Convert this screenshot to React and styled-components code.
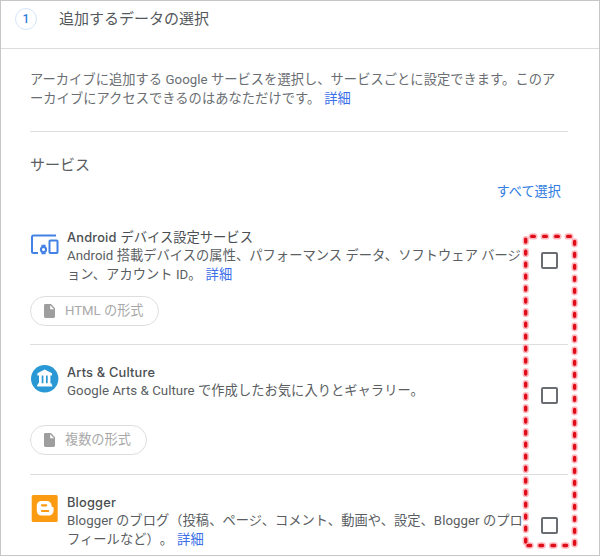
import React from "react";
import styled, { createGlobalStyle } from "styled-components";

const GlobalStyle = createGlobalStyle`
  * { box-sizing: border-box; }
  body {
    margin: 0;
    background: #fff;
    font-family: Roboto, "Noto Sans CJK JP", sans-serif;
    font-size: 13.25px;
    line-height: 18.5px;
    color: #5a5e62;
    text-spacing-trim: space-all;
  }
`;

const Page = styled.div`
  position: relative;
  width: 600px;
  height: 556px;
  overflow: hidden;
  border: 1px solid #c6c6c6;
  background: #fff;
`;

const Header = styled.header`
  display: flex;
  align-items: center;
  gap: 22px;
  height: 48px;
  padding: 0 0 11px 14px;
  border-bottom: 1px solid #dcdcdc;
`;

const StepBadge = styled.span`
  display: flex;
  align-items: center;
  justify-content: center;
  width: 22px;
  height: 22px;
  border: 1px solid #d6e5fb;
  border-radius: 50%;
  color: #2f7de1;
  font-size: 12px;
  font-weight: 500;
`;

const StepTitle = styled.h1`
  margin: 0;
  font-size: 15px;
  font-weight: 400;
  line-height: 20px;
  color: #54585c;
`;

const Body = styled.main`
  width: 567px;
  padding: 22px 0 0 29px;
`;

const Line = styled.span`
  display: block;
  white-space: nowrap;
  letter-spacing: 0.045px;
`;

const Intro = styled.p`
  margin: 0;
  height: 61px;
  color: #6a6e72;
  border-bottom: 1px solid #dedede;
`;

const Link = styled.a`
  margin-left: 4px;
  color: #3b6fe8;
`;

const SectionTitle = styled.h2`
  margin: 22px 0 0;
  font-size: 15px;
  font-weight: 400;
  line-height: 22px;
`;

const SelectAll = styled.div`
  height: 52px;
  padding: 7px 7px 0 0;
  text-align: right;
  font-size: 13.2px;
  color: #2f7de1;
`;

const Service = styled.section`
  display: flex;
  height: ${(p) => p.$height}px;
  border-bottom: 1px solid #dedede;
  padding-top: ${(p) => p.$top}px;
`;

const Info = styled.div`
  width: 511px;
`;

const Summary = styled.div`
  display: flex;
  height: ${(p) => p.$height}px;
`;

const IconCell = styled.div`
  flex: none;
  width: 37px;
  padding-top: ${(p) => p.$top}px;
  svg { display: block; }
`;

const Name = styled.h3`
  margin: 0;
  font-family: Inter, "Noto Sans CJK JP", sans-serif;
  font-size: 13.3px;
  font-weight: 400;
  line-height: 18px;
  color: #4a4e52;
  white-space: nowrap;
`;

const Latin = styled.span`
  font-size: 12.8px;
  font-weight: 500;
  letter-spacing: 0.2px;
`;

const Chip = styled.div`
  display: flex;
  align-items: center;
  gap: 10px;
  width: ${(p) => p.$width}px;
  height: 30px;
  padding: 0 0 0 13px;
  border: 1px solid #dedede;
  border-radius: 15px;
  font-size: 13.2px;
  color: #a9a9a9;
  white-space: nowrap;
`;

const Checkbox = styled.span`
  width: 17px;
  height: 17px;
  margin-top: 24px;
  border: 2px solid #6a6e72;
  border-radius: 2px;
`;

const Highlight = styled.svg`
  position: absolute;
  top: -1px;
  left: -1px;
  pointer-events: none;
`;

function FileIcon() {
  return (
    <svg width="11" height="14" viewBox="0 0 11 14">
      <path d="M1.4 0H7l4 4.2v8.4c0 .8-.6 1.4-1.4 1.4H1.4C.6 14 0 13.4 0 12.600V1.400C0 .6.6 0 1.400 0zM6.200 1.200v4h3.900z" fill="#9e9e9e" fillRule="evenodd" />
    </svg>
  );
}

function DevicesIcon() {
  return (
    <svg width="29" height="26" viewBox="0 0 29 26" fill="none" stroke="#4381e6" strokeWidth="2">
      <path d="M26 3.500H3.500Q2 3.500 2 5V19.500Q2 21 3.500 21H8" />
      <rect x="19.500" y="8.500" width="8" height="12.500" rx=".8" />
      <circle cx="13.500" cy="17.500" r="2.600" />
      <path d="M11.400 13.800h4.200M11.400 21.200h4.200" />
    </svg>
  );
}

function MuseumIcon() {
  return (
    <svg width="29" height="30" viewBox="0 0 29 30">
      <circle cx="14.700" cy="14.700" r="13.700" fill="#2a98d5" />
      <path d="M14.700 5.500l7.300 3.700V11.500H7.400V9.200zM9 11.500h2.700v8H9zM13.400 11.500H16v8h-2.600zM17.700 11.500h2.700v8h-2.700zM8 19.200h13.400v1.200h.8v2H7.200v-2H8z" fill="#fff" />
    </svg>
  );
}

function BloggerIcon() {
  return (
    <svg width="29" height="30" viewBox="0 0 29 30">
      <rect x="1.700" y="2" width="26" height="27" rx="1.500" fill="#fb9b12" />
      <path d="M11.500 8h5.200c2.800 0 4.800 2 4.800 4.600 0 1 .4 1.400 1.100 1.400.7 0 1 .3 1 1v2.600c0 2.900-2.100 5-4.900 5h-7.200c-2.700 0-4.700-2-4.700-4.800v-5c0-2.800 2-4.800 4.700-4.800z" fill="#fff" />
      <path d="M12 12.300h4.200M12 18h6.200" stroke="#fb9b12" strokeWidth="2.200" strokeLinecap="round" />
    </svg>
  );
}

const range = (start, count) => Array.from({ length: count }, (_, i) => start + i * 12);
const dashes = [
  ...range(240.7, 26).map((y) => `M525.700 ${y - 1.4}v2.800`),
  ...range(242.9, 26).map((y) => `M574.600 ${y - 1.4}v2.800`),
  ...range(533, 4).map((x) => `M${x - 1.3} 236.400h2.600`),
  ...range(529.3, 4).map((x) => `M${x - 1.3} 545.500h2.600`),
].join("");

export default function App() {
  return (
    <Page>
      <GlobalStyle />
      <Header>
        <StepBadge>1</StepBadge>
        <StepTitle>追加するデータの選択</StepTitle>
      </Header>
      <Body>
        <Intro>
          <Line>アーカイブに追加する Google サービスを選択し、サービスごとに設定できます。このア</Line>
          <Line>ーカイブにアクセスできるのはあなただけです。<Link>詳細</Link></Line>
        </Intro>
        <SectionTitle>サービス</SectionTitle>
        <SelectAll>すべて選択</SelectAll>
        <Service $height={117} $top={0}>
          <Info>
            <Summary $height={68}>
              <IconCell $top={4}><DevicesIcon /></IconCell>
              <div>
                <Name><Latin>Android</Latin> デバイス設定サービス</Name>
                <Line>Android 搭載デバイスの属性、パフォーマンス データ、ソフトウェア バージ</Line>
                <Line>ョン、アカウント ID。<Link>詳細</Link></Line>
              </div>
            </Summary>
            <Chip $width={129}><FileIcon />HTML の形式</Chip>
          </Info>
          <Checkbox />
        </Service>
        <Service $height={130} $top={18}>
          <Info>
            <Summary $height={62}>
              <IconCell $top={1}><MuseumIcon /></IconCell>
              <div>
                <Name><Latin>Arts &amp; Culture</Latin></Name>
                <Line>Google Arts &amp; Culture で作成したお気に入りとギャラリー。</Line>
              </div>
            </Summary>
            <Chip $width={117}><FileIcon />複数の形式</Chip>
          </Info>
          <Checkbox />
        </Service>
        <Service $height={130} $top={18}>
          <Info>
            <Summary $height={62}>
              <IconCell $top={0}><BloggerIcon /></IconCell>
              <div>
                <Name><Latin>Blogger</Latin></Name>
                <Line>Blogger のブログ（投稿、ページ、コメント、動画や、設定、Blogger のプロ</Line>
                <Line>フィールなど）。<Link>詳細</Link></Line>
              </div>
            </Summary>
          </Info>
          <Checkbox />
        </Service>
      </Body>
      <Highlight width="600" height="556" viewBox="0 0 600 556" fill="none" strokeLinecap="round">
        <path d={dashes} stroke="#ffb9c0" strokeWidth="6.400" />
        <path d={dashes} stroke="#df0d17" strokeWidth="3.400" />
      </Highlight>
    </Page>
  );
}
